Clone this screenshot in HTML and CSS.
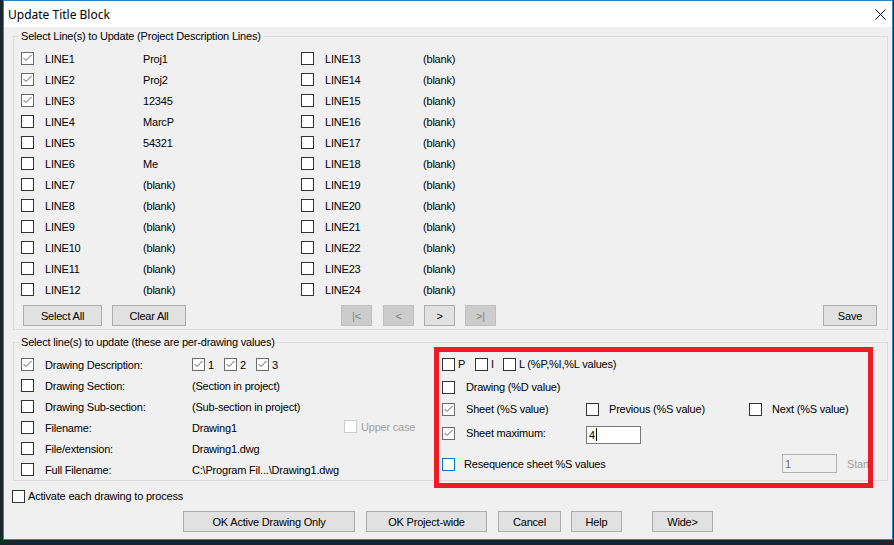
FILE: index.html
```html
<!DOCTYPE html>
<html>
<head>
<meta charset="utf-8">
<title>Update Title Block</title>
<link rel="stylesheet" href="styles.css">
</head>
<body>
<div class="window">
  <div class="titlebar">
    <span class="title">Update Title Block</span>
    <svg class="close" width="11" height="11" viewBox="0 0 11 11"><path d="M0.5 0.5 L10.5 10.5 M10.5 0.5 L0.5 10.5" stroke="#000" stroke-width="1" fill="none"/></svg>
  </div>
  <div class="client">
    <fieldset class="group g1">
      <legend>Select Line(s) to Update (Project Description Lines)</legend>
      <div class="lines">
        <div class="line"><span class="cb on"><svg viewBox="0 0 11 11"><path d="M1.5 5 L4 7.5 L9.5 2"/></svg></span><span class="name">LINE1</span><span>Proj1</span></div>
        <div class="line"><span class="cb on"><svg viewBox="0 0 11 11"><path d="M1.5 5 L4 7.5 L9.5 2"/></svg></span><span class="name">LINE2</span><span>Proj2</span></div>
        <div class="line"><span class="cb on"><svg viewBox="0 0 11 11"><path d="M1.5 5 L4 7.5 L9.5 2"/></svg></span><span class="name">LINE3</span><span>12345</span></div>
        <div class="line"><span class="cb"></span><span class="name">LINE4</span><span>MarcP</span></div>
        <div class="line"><span class="cb"></span><span class="name">LINE5</span><span>54321</span></div>
        <div class="line"><span class="cb"></span><span class="name">LINE6</span><span>Me</span></div>
        <div class="line"><span class="cb"></span><span class="name">LINE7</span><span>(blank)</span></div>
        <div class="line"><span class="cb"></span><span class="name">LINE8</span><span>(blank)</span></div>
        <div class="line"><span class="cb"></span><span class="name">LINE9</span><span>(blank)</span></div>
        <div class="line"><span class="cb"></span><span class="name">LINE10</span><span>(blank)</span></div>
        <div class="line"><span class="cb"></span><span class="name">LINE11</span><span>(blank)</span></div>
        <div class="line"><span class="cb"></span><span class="name">LINE12</span><span>(blank)</span></div>
        <div class="line"><span class="cb"></span><span class="name">LINE13</span><span>(blank)</span></div>
        <div class="line"><span class="cb"></span><span class="name">LINE14</span><span>(blank)</span></div>
        <div class="line"><span class="cb"></span><span class="name">LINE15</span><span>(blank)</span></div>
        <div class="line"><span class="cb"></span><span class="name">LINE16</span><span>(blank)</span></div>
        <div class="line"><span class="cb"></span><span class="name">LINE17</span><span>(blank)</span></div>
        <div class="line"><span class="cb"></span><span class="name">LINE18</span><span>(blank)</span></div>
        <div class="line"><span class="cb"></span><span class="name">LINE19</span><span>(blank)</span></div>
        <div class="line"><span class="cb"></span><span class="name">LINE20</span><span>(blank)</span></div>
        <div class="line"><span class="cb"></span><span class="name">LINE21</span><span>(blank)</span></div>
        <div class="line"><span class="cb"></span><span class="name">LINE22</span><span>(blank)</span></div>
        <div class="line"><span class="cb"></span><span class="name">LINE23</span><span>(blank)</span></div>
        <div class="line"><span class="cb"></span><span class="name">LINE24</span><span>(blank)</span></div>
      </div>
      <div class="btnrow">
        <span class="btn b-selall">Select All</span>
        <span class="btn b-clrall">Clear All</span>
        <div class="nav">
          <span class="btn nb dis">|&lt;</span>
          <span class="btn nb dis">&lt;</span>
          <span class="btn nb">&gt;</span>
          <span class="btn nb dis">&gt;|</span>
        </div>
        <span class="btn b-save">Save</span>
      </div>
    </fieldset>

    <fieldset class="group g2">
      <legend>Select line(s) to update (these are per-drawing values)</legend>
      <div class="g2body">
        <div class="left">
          <div class="frow"><span class="cb on"><svg viewBox="0 0 11 11"><path d="M1.5 5 L4 7.5 L9.5 2"/></svg></span><span>Drawing Description:</span>
            <span class="nums">
              <span class="cb on"><svg viewBox="0 0 11 11"><path d="M1.5 5 L4 7.5 L9.5 2"/></svg></span><span class="num">1</span>
              <span class="cb on"><svg viewBox="0 0 11 11"><path d="M1.5 5 L4 7.5 L9.5 2"/></svg></span><span class="num">2</span>
              <span class="cb on"><svg viewBox="0 0 11 11"><path d="M1.5 5 L4 7.5 L9.5 2"/></svg></span><span class="num">3</span>
            </span>
          </div>
          <div class="frow"><span class="cb"></span><span>Drawing Section:</span><span>(Section in project)</span></div>
          <div class="frow"><span class="cb"></span><span>Drawing Sub-section:</span><span>(Sub-section in project)</span></div>
          <div class="frow"><span class="cb"></span><span>Filename:</span>
            <span class="fnval"><span class="fn">Drawing1</span><span class="cb dis"></span><span class="distext">Upper case</span></span>
          </div>
          <div class="frow"><span class="cb"></span><span>File/extension:</span><span>Drawing1.dwg</span></div>
          <div class="frow"><span class="cb"></span><span>Full Filename:</span><span>C:\Program Fil...\Drawing1.dwg</span></div>
        </div>
        <div class="right">
          <div class="redframe"></div>
          <div class="rrow r1">
            <span class="pil pil-p"><span class="cb"></span><span class="pl">P</span></span>
            <span class="pil pil-i"><span class="cb"></span><span class="pl">I</span></span>
            <span class="pil"><span class="cb"></span><span class="pl">L (%P,%I,%L values)</span></span>
          </div>
          <div class="rrow r2"><span class="cb"></span><span class="rl">Drawing (%D value)</span></div>
          <div class="rrow r3">
            <span class="rc rc1"><span class="cb on"><svg viewBox="0 0 11 11"><path d="M1.5 5 L4 7.5 L9.5 2"/></svg></span><span class="rl">Sheet (%S value)</span></span>
            <span class="rc rc2"><span class="cb"></span><span class="rl">Previous (%S value)</span></span>
            <span class="rc"><span class="cb"></span><span class="rl">Next (%S value)</span></span>
          </div>
          <div class="rrow r4">
            <span class="rc rc1"><span class="cb on"><svg viewBox="0 0 11 11"><path d="M1.5 5 L4 7.5 L9.5 2"/></svg></span><span class="rl">Sheet maximum:</span></span>
            <span class="input">4<span class="caret"></span></span>
          </div>
          <div class="rrow r5">
            <span class="cb focus"></span><span class="rl rl5">Resequence sheet %S values</span>
            <span class="input disinput">1</span><span class="distext start">Start</span>
          </div>
        </div>
      </div>
    </fieldset>

    <div class="activate"><span class="cb"></span><span>Activate each drawing to process</span></div>

    <div class="bottom">
      <span class="btn bb1">OK Active Drawing Only</span>
      <span class="btn bb2">OK Project-wide</span>
      <span class="btn bb3">Cancel</span>
      <span class="btn bb4">Help</span>
      <span class="btn bb5">Wide&gt;</span>
    </div>
  </div>
</div>
</body>
</html>
```

FILE: styles.css
```css
* { box-sizing: border-box; }
html, body { margin: 0; padding: 0; }
body {
  background: #1c2631;
  width: 894px;
  height: 545px;
  overflow: hidden;
  font-family: "Liberation Sans", Arial, sans-serif;
  font-size: 11px;
  letter-spacing: -0.2px;
  color: #000;
}
.window {
  margin-left: 3px;
  width: 890px;
  height: 540px;
  border: 1px solid #2a86c8;
  background: #f0f0f0;
  display: flex;
  flex-direction: column;
}
.titlebar {
  height: 26px;
  background: #fff;
  display: flex;
  align-items: center;
  padding-left: 4px;
}
.title {
  font-family: "Noto Sans", "Liberation Sans", sans-serif;
  font-size: 12px;
  letter-spacing: 0;
  color: #000;
  padding-top: 1px;
}
.close { margin-left: auto; margin-right: 6px; display: block; }
.client {
  flex: 1;
  background: #f0f0f0;
  display: flex;
  flex-direction: column;
}
.group {
  margin: 0 4px 0 9px;
  padding: 0;
  border: 1px solid #dcdcdc;
  min-width: 0;
}
.group legend {
  margin-left: 5px;
  padding: 0 2px;
  line-height: 13px;
  height: 13px;
}
.g1 { margin-top: 3px; height: 300px; }
.g2 { margin-top: 6px; height: 145px; }

/* checkbox */
.cb {
  width: 13px;
  height: 13px;
  border: 1px solid #333;
  background: #fff;
  display: inline-flex;
  align-items: center;
  justify-content: center;
  flex: none;
}
.cb.on { border-color: #6a6a6a; }
.cb svg { width: 11px; height: 11px; display: block; }
.cb svg path { fill: none; stroke: #5a5a5a; stroke-width: 1; }
.cb.dis { border-color: #cccccc; background: #fff; }
.cb.focus { border-color: #0078d7; }

.lines {
  display: grid;
  grid-template-columns: 280px 280px;
  grid-template-rows: repeat(12, 21px);
  grid-auto-flow: column;
  padding: 5px 0 0 7px;
}
.line { display: flex; align-items: center; }
.line .cb { margin-right: 11px; }
.line .name { width: 98px; }

.btnrow {
  display: flex;
  align-items: center;
  margin-top: 5px;
  padding-left: 9px;
  padding-right: 10px;
}
.btn {
  height: 21px;
  background: #e1e1e1;
  border: 1px solid #adadad;
  display: inline-flex;
  align-items: center;
  justify-content: center;
  flex: none;
}
.b-selall { width: 79px; }
.b-clrall { width: 74px; margin-left: 10px; }
.nav { display: flex; margin-left: 155px; }
.nb { width: 31px; margin-right: 10px; }
.nb:first-child { margin-right: 11px; }
.nb.dis { background: #cccccc; border-color: #bfbfbf; color: #838383; }
.b-save { width: 54px; margin-left: auto; }

.g2body { display: flex; padding-top: 5px; }
.left { width: 421px; padding-left: 7px; }
.frow {
  height: 21px;
  display: grid;
  grid-template-columns: 24px 147px 1fr;
  align-items: center;
}
.nums { display: flex; align-items: center; }
.nums .num { width: 19px; padding-left: 3px; }
.fnval { display: flex; align-items: center; }
.fn { width: 152px; }
.fnval .cb { margin-top: -2px; }
.distext { color: #a0a0a0; }
.fnval .distext { padding-left: 4px; margin-top: -2px; }

.right { position: relative; flex: 1; padding-left: 7px; }
.redframe {
  position: absolute;
  left: -1px;
  top: -7px;
  width: 439px;
  height: 141px;
  border: 5px solid #ed1c24;
  pointer-events: none;
}
.rrow { display: flex; align-items: center; height: 20px; }
.r2 { margin-top: 3px; }
.r3 { margin-top: 2px; }
.r4 { margin-top: 4px; }
.r5 { margin-top: 11px; }
.pil { display: flex; align-items: center; }
.pil .pl { padding-left: 3px; }
.pil-p { width: 33px; }
.pil-i { width: 28px; }
.rl { padding-left: 11px; }
.rc { display: flex; align-items: center; }
.rc1 { width: 144px; }
.rc2 { width: 163px; }
.rc2 .rl, .rc2 + .rc .rl { padding-left: 10px; }
.input {
  width: 55px;
  height: 18px;
  border: 1px solid #7a7a7a;
  background: #fff;
  display: flex;
  align-items: center;
  padding-left: 2px;
  margin-top: 3px;
}
.caret { width: 1px; height: 13px; background: #000; margin-left: 1px; }
.rl5 { padding-left: 9px; width: 327px; }
.disinput {
  background: #f0f0f0;
  border-color: #b3b3b3;
  color: #6d6d6d;
  height: 19px;
  margin-top: -1px;
}
.start { padding-left: 10px; }

.activate {
  display: flex;
  align-items: center;
  height: 20px;
  margin-top: 5px;
  padding-left: 8px;
}
.activate .cb { margin-right: 3px; }

.bottom {
  display: flex;
  margin-top: 5px;
  padding-left: 179px;
}
.bb1 { width: 172px; }
.bb2 { width: 121px; margin-left: 11px; }
.bb3 { width: 63px; margin-left: 11px; }
.bb4 { width: 51px; margin-left: 10px; }
.bb5 { width: 61px; margin-left: 30px; }
```
